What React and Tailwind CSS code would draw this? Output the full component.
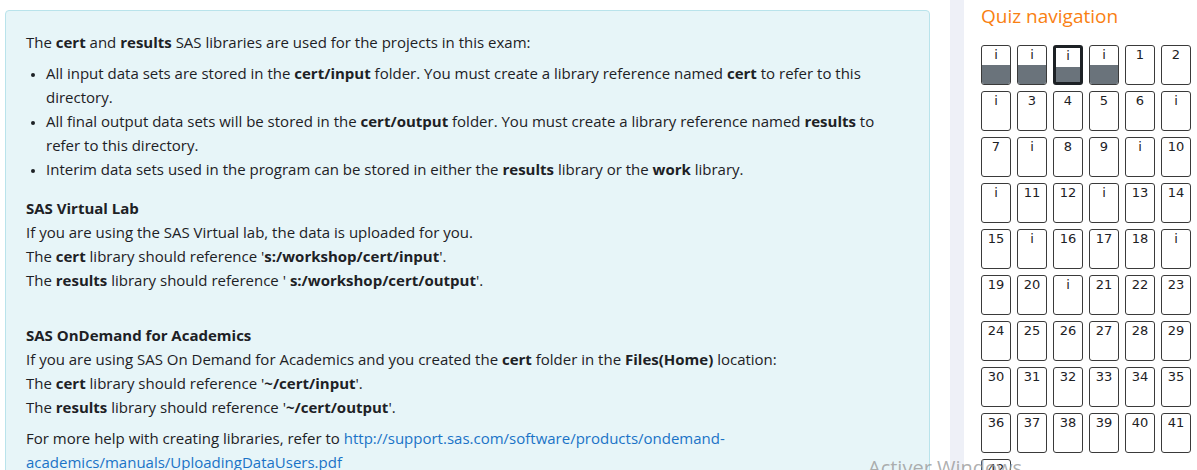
import React from "react";

const NAV_ROWS = [
  ["i", "i", "i", "i", "1", "2"],
  ["i", "3", "4", "5", "6", "i"],
  ["7", "i", "8", "9", "i", "10"],
  ["i", "11", "12", "i", "13", "14"],
  ["15", "i", "16", "17", "18", "i"],
  ["19", "20", "i", "21", "22", "23"],
  ["24", "25", "26", "27", "28", "29"],
  ["30", "31", "32", "33", "34", "35"],
  ["36", "37", "38", "39", "40", "41"],
  ["42"],
];

const NavButton = ({ label, answered, current }) => (
  <div
    className={`flex h-[40px] w-[30px] flex-col overflow-hidden rounded-[3px] bg-white ${
      current ? "border-[3px] border-[#1d2125]" : "border border-[#3a3a3a]"
    }`}
  >
    <span
      className={`flex h-[19px] shrink-0 justify-center text-[13px] leading-[16px] text-[#1d2125] ${
        current ? "pt-0" : "pt-[1px]"
      }`}
    >
      {label}
    </span>
    {answered && <span className="flex-1 bg-[#6a737b]" />}
  </div>
);

const QuizNavigation = () => (
  <div className="flex-1 bg-white pl-[17px] pt-[5px]">
    <h3 className="font-['Open_Sans',sans-serif] text-[19px] leading-[22px] text-[#f98012]">
      Quiz navigation
    </h3>
    <div className="mt-[18px] grid grid-cols-[repeat(6,30px)] gap-[6px] font-['DejaVu_Sans',sans-serif]">
      {NAV_ROWS.flatMap((row, r) =>
        row.map((label, c) => (
          <NavButton
            key={`${r}-${c}`}
            label={label}
            answered={r === 0 && c < 4}
            current={r === 0 && c === 2}
          />
        ))
      )}
    </div>
  </div>
);

const Info = () => (
  <div className="ml-[5px] mt-[10px] w-[925px] rounded-[4px] border border-[#b9e3eb] bg-[#e7f5f8] pl-[20px] pr-[40px] pt-[19px] pb-6 text-[15px] leading-[24px] text-[#1d2125]">
    <p>
      The <b>cert</b> and <b>results</b> SAS libraries are used for the projects in this exam:
    </p>
    <ul className="mt-[7px] list-disc pl-[20px] marker:text-[11px]">
      <li>
        All input data sets are stored in the <b>cert/input</b> folder. You must create a library
        reference named <b>cert</b> to refer to this directory.
      </li>
      <li>
        All final output data sets will be stored in the <b>cert/output</b> folder. You must create a
        library reference named <b>results</b> to refer to this directory.
      </li>
      <li>
        Interim data sets used in the program can be stored in either the <b>results</b> library or
        the <b>work</b> library.
      </li>
    </ul>

    <div className="mt-[15px]">
      <p><b>SAS Virtual Lab</b></p>
      <p>If you are using the SAS Virtual lab, the data is uploaded for you.</p>
      <p>
        The <b>cert</b> library should reference '<b>s:/workshop/cert/input</b>'.
      </p>
      <p>
        The <b>results</b> library should reference ' <b>s:/workshop/cert/output</b>'.
      </p>
    </div>

    <div className="mt-[31px]">
      <p><b>SAS OnDemand for Academics</b></p>
      <p>
        If you are using SAS On Demand for Academics and you created the <b>cert</b> folder in the{" "}
        <b>Files(Home)</b> location:
      </p>
      <p>
        The <b>cert</b> library should reference '<b>~/cert/input</b>'.
      </p>
      <p>
        The <b>results</b> library should reference '<b>~/cert/output</b>'.
      </p>
    </div>

    <p className="mt-[7px] w-[720px]">
      For more help with creating libraries, refer to{" "}
      <a href="#" className="text-[#1a73c7]">
        http://support.sas.com/software/products/ondemand-academics/manuals/UploadingDataUsers.pdf
      </a>
    </p>
  </div>
);

export default function App() {
  return (
    <div className="relative flex h-[470px] w-[1197px] overflow-hidden bg-white font-['Open_Sans',sans-serif]">
      <div className="w-[950px] shrink-0">
        <Info />
      </div>
      <div className="w-[14px] shrink-0 bg-[#eef0f7]" />
      <QuizNavigation />
      <span className="pointer-events-none absolute left-[868px] top-[456px] font-['Open_Sans',sans-serif] text-[20px] leading-[24px] text-[#9a9a9a]/80">
        Activer Windows
      </span>
    </div>
  );
}
